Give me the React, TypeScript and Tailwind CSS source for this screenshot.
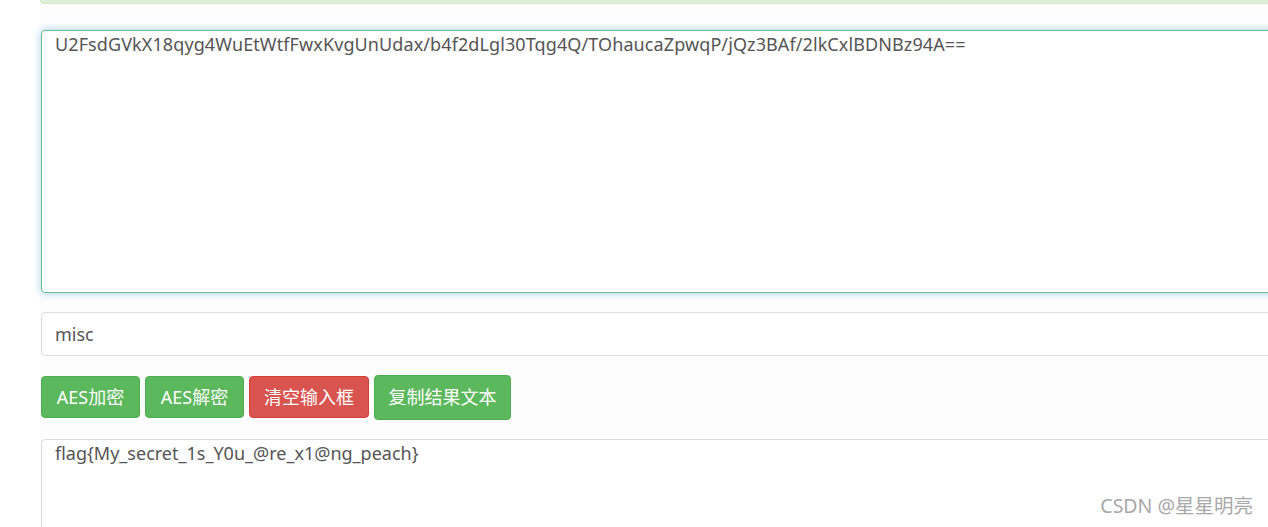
export default function App() {
  const font = { fontFamily: '"Noto Sans", "Noto Sans CJK SC", sans-serif' }
  return (
    <div className="relative h-[527px] w-full overflow-hidden bg-white text-[#555]" style={font}>
      <div className="ml-[40px] h-full w-[1240px] bg-[#fdfdfd]">
        <div className="h-[4px] rounded-bl-[4px] border-b border-l border-[#d6e9c6] bg-[#dff0d8]" />

        <div className="ml-px mt-[26px] h-[263px] rounded-[4px] border border-[#66c08a] bg-white px-[13px] pt-0 text-[18px] leading-[26px] tracking-[0.1px] shadow-[0_0_8px_rgba(102,175,233,0.6)]">
          U2FsdGVkX18qyg4WuEtWtfFwxKvgUnUdax/b4f2dLgl30Tqg4Q/TOhaucaZpwqP/jQz3BAf/2lkCxlBDNBz94A==
        </div>

        <div className="ml-px mt-[19px] flex h-[44px] items-center rounded-[4px] border border-[#dcdcdc] bg-white px-[13px] text-[18px]">
          misc
        </div>

        <div className="ml-px mt-[20px] flex items-start gap-[5px] text-[18px] text-white">
          <button className="h-[42px] w-[99px] rounded-[4px] border border-[#4cae4c] bg-[#5cb85c]">AES加密</button>
          <button className="h-[42px] w-[99px] rounded-[4px] border border-[#4cae4c] bg-[#5cb85c]">AES解密</button>
          <button className="h-[42px] w-[120px] rounded-[4px] border border-[#d43f3a] bg-[#d9534f]">清空输入框</button>
          <button className="-mt-px h-[45px] w-[137px] rounded-[4px] border border-[#4cae4c] bg-[#5cb85c]">复制结果文本</button>
        </div>

        <div className="ml-px mt-[19px] h-[120px] rounded-[4px] border border-[#dcdcdc] bg-white px-[13px] text-[18px] leading-[26px]">
          flag{'{'}My_secret_1s_Y0u_@re_x1@ng_peach{'}'}
        </div>
      </div>

      <div className="absolute bottom-[7px] right-[15px] text-[19.5px] text-[#a8a8a8]">CSDN @星星明亮</div>
    </div>
  )
}
